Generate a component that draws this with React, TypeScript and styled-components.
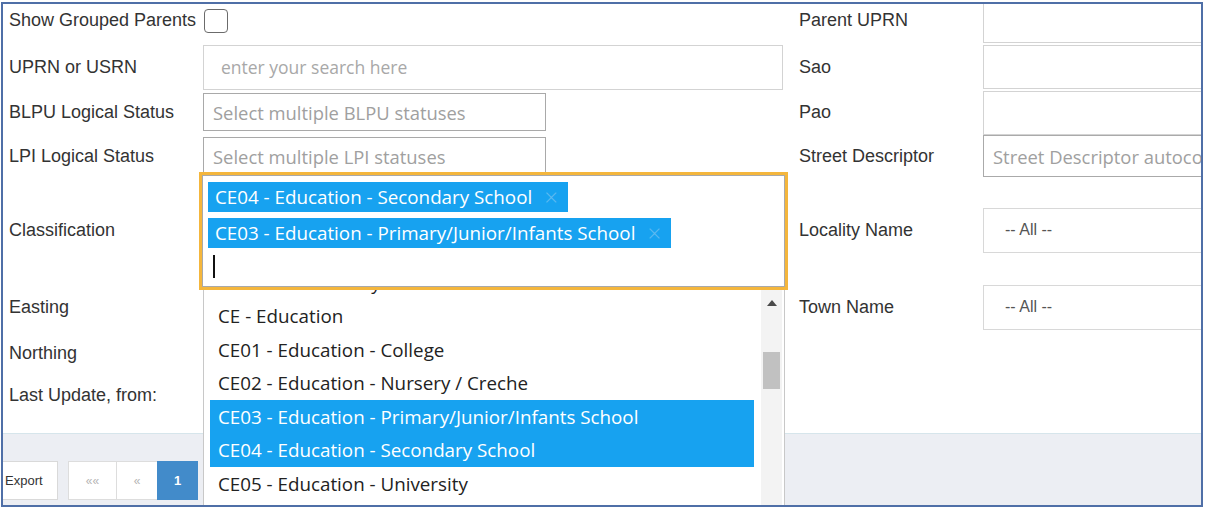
import React from 'react'
import styled, { createGlobalStyle } from 'styled-components'

const GlobalStyle = createGlobalStyle`
  html, body {
    margin: 0;
    padding: 0;
    background: #fff;
  }
  body {
    font-family: 'Liberation Sans', Arial, sans-serif;
  }
`

const Frame = styled.div`
  box-sizing: border-box;
  margin: 2px 0 0 1px;
  width: 1202px;
  height: 505px;
  border: 2px solid #4f6fa7;
  overflow: hidden;
  background: #fff;
  display: flex;
  flex-direction: column;
`

const Form = styled.div`
  display: grid;
  grid-template-columns: 194px 584px 196px 280px;
  grid-template-rows: 40px 46px 44px 44px 104px 50px 42px 42px;
  padding: 0 0 17px 6px;
`

const Cell = styled.div<{ $top?: boolean }>`
  display: flex;
  align-items: ${(p) => (p.$top ? 'flex-start' : 'center')};
  min-width: 0;
`

const Label = styled.div<{ $lift?: number; $right?: boolean }>`
  font-size: 18px;
  line-height: 22px;
  color: #333;
  white-space: nowrap;
  padding-bottom: ${(p) => p.$lift ?? 0}px;
  padding-left: ${(p) => (p.$right ? 12 : 0)}px;
`

const Checkbox = styled.div`
  box-sizing: border-box;
  width: 24px;
  height: 24px;
  margin: 5px 0 0 1px;
  border: 1.5px solid #6b6b6b;
  border-radius: 4px;
  background: #fff;
`

const SearchInput = styled.input`
  box-sizing: border-box;
  width: 580px;
  height: 45px;
  border: 1px solid #d3d3d3;
  padding: 0 17px;
  font: 17.5px 'Open Sans', sans-serif;
  outline: none;
  &::placeholder {
    color: #a8a8a8;
  }
`

const StatusInput = styled.input`
  box-sizing: border-box;
  width: 343px;
  height: 38px;
  border: 1px solid #a9a9a9;
  padding: 0 9px;
  font: 18.4px 'Open Sans', sans-serif;
  outline: none;
  &::placeholder {
    color: #a0a0a0;
  }
`

const SideInput = styled.input<{ $h: number; $dark?: boolean; $shift?: number }>`
  box-sizing: border-box;
  width: 280px;
  height: ${(p) => p.$h}px;
  margin-top: ${(p) => p.$shift ?? 0}px;
  border: 1px solid ${(p) => (p.$dark ? '#aaa' : '#d3d3d3')};
  padding: 0 9px;
  font: 18.4px 'Open Sans', sans-serif;
  outline: none;
  &::placeholder {
    color: #a0a0a0;
  }
`

const SideSelect = styled.div`
  box-sizing: border-box;
  width: 280px;
  height: 45px;
  border: 1px solid #d8d8d8;
  padding-left: 21px;
  display: flex;
  align-items: center;
  font-size: 16px;
  color: #555;
`

const MultiField = styled.div`
  position: relative;
  z-index: 5;
  align-self: stretch;
  box-sizing: border-box;
  width: 583px;
  margin: -3px 0 -5px -1px;
  border: 1px solid #a9a9a9;
  box-shadow: 0 0 0 3px #f4b63c;
  background: #fff;
  padding: 6px 5px;
  display: flex;
  flex-wrap: wrap;
  align-content: flex-start;
  gap: 6px;
`

const Tag = styled.span`
  display: inline-flex;
  align-items: center;
  height: 30px;
  padding: 0 10px 0 7px;
  gap: 12px;
  background: #17a2f0;
  color: #fff;
  font: 18.8px 'Open Sans', sans-serif;
  white-space: nowrap;
`

const TagRemove = styled.span`
  color: #5fbaf0;
  font-size: 24px;
  line-height: 1;
  font-weight: 300;
`

const Caret = styled.span`
  display: block;
  flex-basis: 100%;
  height: 26px;
  &::before {
    content: '';
    display: block;
    width: 2px;
    height: 23px;
    margin: 1px 0 0 5px;
    background: #111;
  }
`

const Dropdown = styled.div`
  position: absolute;
  z-index: 10;
  left: 0;
  top: calc(100% + 4px);
  box-sizing: border-box;
  width: 582px;
  height: 240px;
  background: #fff;
  border: 1px solid #c8c8c8;
  border-top: none;
  display: flex;
  overflow: hidden;
`

const OptionList = styled.div`
  flex: 1;
  padding: 0 7px 0 6px;
  margin-top: -24px;
`

const Option = styled.div<{ $selected?: boolean }>`
  height: 33.5px;
  display: flex;
  align-items: center;
  padding-left: 8px;
  font: 18.8px 'Open Sans', sans-serif;
  white-space: nowrap;
  color: ${(p) => (p.$selected ? '#fff' : '#222')};
  background: ${(p) => (p.$selected ? '#17a2f0' : 'transparent')};
`

const Scrollbar = styled.div`
  width: 21px;
  margin-right: 2px;
  background: #f3f3f3;
  display: flex;
  flex-direction: column;
  align-items: center;
`

const ScrollArrow = styled.div`
  margin-top: 10px;
  width: 0;
  height: 0;
  border-left: 5px solid transparent;
  border-right: 5px solid transparent;
  border-bottom: 6px solid #4a4a4a;
`

const ScrollThumb = styled.div`
  margin-top: 46px;
  width: 17px;
  height: 37px;
  background: #c1c1c1;
`

const Footer = styled.div`
  flex: 1;
  background: #eceef3;
  border-top: 1px solid #d6e5eb;
  display: flex;
  align-items: flex-end;
  padding-bottom: 5px;
`

const ExportButton = styled.div`
  box-sizing: border-box;
  width: 65px;
  height: 39px;
  margin-left: -10px;
  padding-left: 11px;
  background: #fff;
  border: 1px solid #d9d9d9;
  display: flex;
  align-items: center;
  font-size: 13px;
  color: #333;
`

const Pagination = styled.div`
  display: flex;
  margin-left: 11px;
`

const PageCell = styled.div<{ $w: number; $active?: boolean }>`
  box-sizing: border-box;
  width: ${(p) => p.$w}px;
  height: 39px;
  margin-left: -1px;
  display: flex;
  align-items: center;
  justify-content: center;
  border: 1px solid ${(p) => (p.$active ? '#428bca' : '#ddd')};
  background: ${(p) => (p.$active ? '#428bca' : '#fff')};
  color: ${(p) => (p.$active ? '#fff' : '#b5b5b5')};
  font-size: ${(p) => (p.$active ? 13 : 12)}px;
  font-weight: ${(p) => (p.$active ? 700 : 400)};
`

const options = [
  'CC11 - Community Services - CCTV',
  'CE - Education',
  'CE01 - Education - College',
  'CE02 - Education - Nursery / Creche',
  'CE03 - Education - Primary/Junior/Infants School',
  'CE04 - Education - Secondary School',
  'CE05 - Education - University',
  'CE06 - Education - Special Needs Establishment',
]

const selected = [
  'CE04 - Education - Secondary School',
  'CE03 - Education - Primary/Junior/Infants School',
]

export default function App() {
  return (
    <>
      <GlobalStyle />
      <Frame>
        <Form>
          {/* row 1 */}
          <Cell>
            <Label $lift={8}>Show Grouped Parents</Label>
          </Cell>
          <Cell $top>
            <Checkbox />
          </Cell>
          <Cell>
            <Label $lift={8} $right>Parent UPRN</Label>
          </Cell>
          <Cell $top>
            <SideInput $h={41} $shift={-2} />
          </Cell>

          {/* row 2 */}
          <Cell>
            <Label>UPRN or USRN</Label>
          </Cell>
          <Cell>
            <SearchInput placeholder="enter your search here" />
          </Cell>
          <Cell>
            <Label $right>Sao</Label>
          </Cell>
          <Cell>
            <SideInput $h={44} />
          </Cell>

          {/* row 3 */}
          <Cell>
            <Label>BLPU Logical Status</Label>
          </Cell>
          <Cell>
            <StatusInput placeholder="Select multiple BLPU statuses" />
          </Cell>
          <Cell>
            <Label $right>Pao</Label>
          </Cell>
          <Cell>
            <SideInput $h={44} $shift={2} />
          </Cell>

          {/* row 4 */}
          <Cell>
            <Label>LPI Logical Status</Label>
          </Cell>
          <Cell>
            <StatusInput placeholder="Select multiple LPI statuses" />
          </Cell>
          <Cell>
            <Label $right>Street Descriptor</Label>
          </Cell>
          <Cell>
            <SideInput $h={42} $dark placeholder="Street Descriptor autocomplete" />
          </Cell>

          {/* row 5 */}
          <Cell>
            <Label>Classification</Label>
          </Cell>
          <Cell>
            <MultiField>
              {selected.map((s) => (
                <Tag key={s}>
                  {s}
                  <TagRemove>×</TagRemove>
                </Tag>
              ))}
              <Caret />
              <Dropdown>
                <OptionList>
                  {options.map((o) => (
                    <Option key={o} $selected={selected.includes(o)}>
                      {o}
                    </Option>
                  ))}
                </OptionList>
                <Scrollbar>
                  <ScrollArrow />
                  <ScrollThumb />
                </Scrollbar>
              </Dropdown>
            </MultiField>
          </Cell>
          <Cell>
            <Label $right>Locality Name</Label>
          </Cell>
          <Cell>
            <SideSelect>-- All --</SideSelect>
          </Cell>

          {/* row 6 */}
          <Cell>
            <Label>Easting</Label>
          </Cell>
          <Cell />
          <Cell>
            <Label $right>Town Name</Label>
          </Cell>
          <Cell>
            <SideSelect>-- All --</SideSelect>
          </Cell>

          {/* row 7 */}
          <Cell>
            <Label>Northing</Label>
          </Cell>
          <Cell />
          <Cell />
          <Cell />

          {/* row 8 */}
          <Cell>
            <Label>Last Update, from:</Label>
          </Cell>
          <Cell />
          <Cell />
          <Cell />
        </Form>
        <Footer>
          <ExportButton>Export</ExportButton>
          <Pagination>
            <PageCell $w={49}>««</PageCell>
            <PageCell $w={42}>«</PageCell>
            <PageCell $w={41} $active>
              1
            </PageCell>
          </Pagination>
        </Footer>
      </Frame>
    </>
  )
}
